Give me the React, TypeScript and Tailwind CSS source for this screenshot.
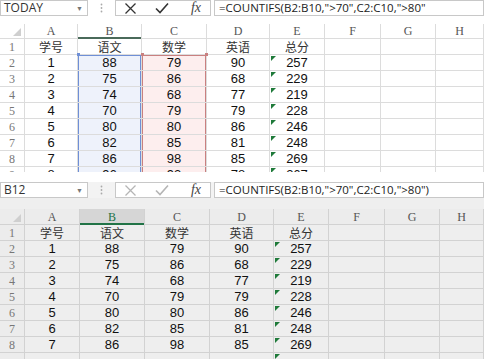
import React from "react";

const rows: string[][] = [
  ["学号", "语文", "数学", "英语", "总分"],
  ["1", "88", "79", "90", "257"],
  ["2", "75", "86", "68", "229"],
  ["3", "74", "68", "77", "219"],
  ["4", "70", "79", "79", "228"],
  ["5", "80", "80", "86", "246"],
  ["6", "82", "85", "81", "248"],
  ["7", "86", "98", "85", "269"],
  ["8", "96", "93", "78", "267"],
];

const letters = ["A", "B", "C", "D", "E", "F", "G", "H"];

function XIcon({ color }: { color: string }) {
  return (
    <svg width="13" height="13" viewBox="0 0 13 13">
      <path d="M1.5 1.5 L11.5 11.5 M11.5 1.5 L1.5 11.5" stroke={color} strokeWidth="1.3" fill="none" />
    </svg>
  );
}

function CheckIcon({ color }: { color: string }) {
  return (
    <svg width="14" height="12" viewBox="0 0 14 12">
      <path d="M1 6.5 L5 10.5 L13 1.5" stroke={color} strokeWidth="1.6" fill="none" />
    </svg>
  );
}

function FormulaBar({
  name,
  formula,
  dark,
}: {
  name: string;
  formula: string;
  dark: boolean;
}) {
  const iconColor = dark ? "#333333" : "#b5b5b5";
  return (
    <div className={`flex h-[16px] items-stretch ${dark ? "bg-white" : "bg-[#f3f3f3]"}`}>
      <div className="relative flex w-[88px] items-center border border-[#c8c8c8] bg-white pl-[3px]">
        <span className="text-[12px] leading-none text-[#333]" style={{ fontFamily: '"Open Sans", "Noto Sans", sans-serif' }}>
          {name}
        </span>
        <span className="absolute right-[4px] top-[3px] text-[7px] text-[#777]">▼</span>
      </div>
      <div className="flex w-[27px] items-center justify-center">
        <svg width="3" height="10" viewBox="0 0 3 10">
          <circle cx="1.5" cy="1.5" r="0.9" fill="#aaa" />
          <circle cx="1.5" cy="5" r="0.9" fill="#aaa" />
          <circle cx="1.5" cy="8.5" r="0.9" fill="#aaa" />
        </svg>
      </div>
      <div className="flex w-[96px] items-center border border-[#c8c8c8] bg-white">
        <div className="flex w-[26px] justify-center pl-[2px]">
          <XIcon color={iconColor} />
        </div>
        <div className="flex w-[40px] justify-center">
          <CheckIcon color={iconColor} />
        </div>
        <div className="flex w-[28px] justify-center">
          <span
            className="text-[14px] italic leading-none text-[#444]"
            style={{ fontFamily: '"Liberation Serif", serif' }}
          >
            fx
          </span>
        </div>
      </div>
      <div className="ml-[3px] flex flex-1 items-center border border-[#c8c8c8] bg-white pl-[4px]">
        <span
          className="whitespace-nowrap text-[11.5px] leading-none text-[#222]"
          style={{ fontFamily: '"Open Sans", "Noto Sans", sans-serif' }}
        >
          {formula}
        </span>
      </div>
    </div>
  );
}

function Sheet({
  cols,
  variant,
  headerH,
  hideLastText,
}: {
  cols: number[];
  variant: "top" | "bottom";
  headerH: number;
  hideLastText?: boolean;
}) {
  const isTop = variant === "top";
  const grid = isTop ? "border-[#dcdcdc]" : "border-[#d2d2d2]";
  const cellBg = isTop ? "bg-white" : "bg-[#eeeeee]";
  const headerBg = isTop ? "bg-white" : "bg-[#ececec]";
  return (
    <div className={`flex flex-col ${cellBg}`}>
      {/* header row */}
      <div className="flex" style={{ height: headerH }}>
        <div
          className={`relative shrink-0 border-r border-b ${grid} ${headerBg}`}
          style={{ width: cols[0] }}
        >
          <svg className="absolute bottom-[2px] right-[3px]" width="8" height="8" viewBox="0 0 8 8">
            <polygon points="8,0 8,8 0,8" fill="#cfcfcf" />
          </svg>
        </div>
        {letters.map((l, i) => {
          const isB = i === 1;
          let cls = `${headerBg} text-[#555]`;
          if (isB && !isTop) cls = "bg-[#d6d6d6] text-[#217346]";
          return (
            <div
              key={l}
              className={`relative flex shrink-0 items-center justify-center border-r border-b ${grid} ${cls}`}
              style={{ width: cols[i + 1], fontFamily: '"Liberation Serif", serif', fontSize: 12 }}
            >
              {l}
              {isB && (
                <div
                  className={`absolute bottom-[-1px] left-0 right-0 h-[2px] ${isTop ? "bg-[#4a6a5a]" : "bg-[#217346]"}`}
                />
              )}
            </div>
          );
        })}
      </div>
      {rows.map((r, ri) => {
        const hidden = hideLastText && ri === rows.length - 1;
        return (
          <div key={ri} className="flex h-[16px]">
            <div
              className={`flex shrink-0 items-center justify-center border-r border-b ${grid} ${headerBg} text-[12px] text-[#777]`}
              style={{ width: cols[0], fontFamily: '"Liberation Serif", serif' }}
            >
              {hidden ? "" : ri + 1}
            </div>
            {letters.map((l, ci) => {
              const v = hidden ? "" : r[ci] ?? "";
              const isHead = ri === 0;
              let bg = "";
              let shadow = "";
              if (isTop && ri >= 1 && ci === 1) {
                bg = "bg-[#eef2fb]";
                shadow =
                  ri === 1
                    ? "shadow-[inset_1px_0_0_#6f8fd6,inset_-1px_0_0_#6f8fd6,inset_0_1px_0_#6f8fd6]"
                    : "shadow-[inset_1px_0_0_#6f8fd6,inset_-1px_0_0_#6f8fd6]";
              }
              if (isTop && ri >= 1 && ci === 2) {
                bg = "bg-[#fdeeee]";
                shadow =
                  ri === 1
                    ? "shadow-[inset_1px_0_0_#c98080,inset_-1px_0_0_#c98080,inset_0_1px_0_#c98080]"
                    : "shadow-[inset_1px_0_0_#c98080,inset_-1px_0_0_#c98080]";
              }
              return (
                <div
                  key={l}
                  className={`relative flex shrink-0 items-center justify-center border-r border-b ${grid} ${bg} ${shadow}`}
                  style={{ width: cols[ci + 1] }}
                >
                  {isHead ? (
                    <span
                      className="text-[12px] leading-none text-[#333]"
                      style={{ fontFamily: '"Noto Sans CJK SC", sans-serif' }}
                    >
                      {v}
                    </span>
                  ) : (
                    <span
                      className="text-[13px] leading-none text-[#111]"
                      style={{ fontFamily: '"Liberation Sans", Arial, sans-serif' }}
                    >
                      {v}
                    </span>
                  )}
                  {!isHead && ci === 4 && (
                    <svg className="absolute left-[1px] top-[1px]" width="5" height="5" viewBox="0 0 5 5">
                      <polygon points="0,0 5,0 0,5" fill="#1f7a3a" />
                    </svg>
                  )}
                  {isTop && ri === 1 && ci === 1 && (
                    <div className="absolute left-[-1px] top-[-2px] h-[3px] w-[3px] bg-[#6f8fd6]" />
                  )}
                  {isTop && ri === 1 && ci === 2 && (
                    <>
                      <div className="absolute left-[-1px] top-[-2px] h-[3px] w-[3px] bg-[#c98080]" />
                      <div className="absolute right-[-2px] top-[-2px] h-[3px] w-[3px] bg-[#c98080]" />
                    </>
                  )}
                </div>
              );
            })}
          </div>
        );
      })}
    </div>
  );
}

export default function App() {
  const topCols = [25, 53, 64, 65, 63, 55, 56, 55, 48];
  const botCols = [25, 55, 65, 65, 64, 55, 56, 55, 44];
  return (
    <div className="h-[359px] w-[484px] overflow-hidden bg-white">
      <div className="flex h-[172px] flex-col overflow-hidden bg-white">
        <FormulaBar name="TODAY" formula={'=COUNTIFS(B2:B10,">70",C2:C10,">80"'} dark />
        <div className="h-[8px] shrink-0" />
        <Sheet cols={topCols} variant="top" headerH={15} />
      </div>
      <div className="h-[10px]" />
      <div className="flex h-[177px] flex-col overflow-hidden bg-[#efefef]">
        <FormulaBar name="B12" formula={'=COUNTIFS(B2:B10,">70",C2:C10,">80")'} dark={false} />
        <div className="h-[11px] shrink-0" />
        <Sheet cols={botCols} variant="bottom" headerH={16} hideLastText />
      </div>
    </div>
  );
}
